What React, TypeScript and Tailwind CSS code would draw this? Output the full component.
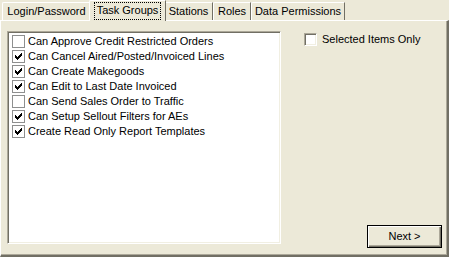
import React from "react";

const items = [
  { label: "Can Approve Credit Restricted Orders", checked: false },
  { label: "Can Cancel Aired/Posted/Invoiced Lines", checked: true },
  { label: "Can Create Makegoods", checked: true },
  { label: "Can Edit to Last Date Invoiced", checked: true },
  { label: "Can Send Sales Order to Traffic", checked: false },
  { label: "Can Setup Sellout Filters for AEs", checked: true },
  { label: "Create Read Only Report Templates", checked: true },
];

const tabs = [
  { label: "Login/Password", width: "w-[89px]" },
  { label: "Task Groups", width: "w-[77px]", selected: true },
  { label: "Stations", width: "w-[49px]" },
  { label: "Roles", width: "w-[38px]" },
  { label: "Data Permissions", width: "w-[94px]" },
];

function Check() {
  return (
    <svg width="7" height="7" viewBox="0 0 7 7" className="block">
      <path d="M0 2h1v1h1v1h1V3h1V2h1V1h1V0h1v3H6v1H5v1H4v1H3v1H2V6H1V5H0z" fill="#000" />
    </svg>
  );
}

function ListCheckbox({ checked }: { checked: boolean }) {
  return (
    <div className="flex h-[13px] w-[13px] items-center justify-center border border-[#8e8f8f] bg-white">
      {checked && <Check />}
    </div>
  );
}

export default function App() {
  return (
    <div
      className="relative h-[257px] w-[449px] overflow-hidden bg-[#ece9d8] text-[11px] leading-none text-black"
      style={{ fontFamily: '"Liberation Sans", Arial, sans-serif' }}
    >
      <div className="flex h-[20px] items-end pl-[2px]">
        {tabs.map((tab) =>
          tab.selected ? (
            <div
              key={tab.label}
              className={`${tab.width} relative z-10 -mx-[2px] -mb-[1px] flex h-[21px] items-center justify-center rounded-tl-[2px] border-l border-t border-r border-l-white border-t-white border-r-[#716f64] bg-[#ece9d8] pb-[1px]`}
            >
              <span className="border border-dotted border-black px-[2px] pb-[3px] pt-[2px]">{tab.label}</span>
            </div>
          ) : (
            <div
              key={tab.label}
              className={`${tab.width} flex h-[18px] items-center justify-center rounded-tl-[2px] border-l border-t border-r border-l-white border-t-white border-r-[#716f64] pb-[1px]`}
            >
              {tab.label}
            </div>
          )
        )}
      </div>

      <div className="flex h-[237px] border-b-2 border-l border-r-2 border-t border-b-[#716f64] border-l-white border-r-[#716f64] border-t-white pl-[6px] pt-[10px] shadow-[inset_-1px_-1px_0_#aca899]">
        <div className="h-[213px] w-[274px] border border-b-white border-l-[#aca899] border-r-white border-t-[#aca899] bg-white shadow-[inset_1px_1px_0_#716f64,inset_-1px_-1px_0_#f1efe2]">
          <div className="pl-[4px] pt-[2px]">
            {items.map((item) => (
              <div key={item.label} className="flex h-[15px] items-center gap-[3px]">
                <ListCheckbox checked={item.checked} />
                <span className="whitespace-nowrap">{item.label}</span>
              </div>
            ))}
          </div>
        </div>

        <div className="flex flex-1 flex-col justify-between pb-[7px] pr-[5px]">
          <div className="ml-[23px] mt-[2px] flex items-center gap-[5px]">
            <div className="h-[13px] w-[13px] border border-b-white border-l-[#aca899] border-r-white border-t-[#aca899] bg-white shadow-[inset_1px_1px_0_#716f64,inset_-1px_-1px_0_#f1efe2]" />
            <span className="whitespace-nowrap">Selected Items Only</span>
          </div>
          <div className="flex justify-end">
            <button className="flex h-[23px] w-[75px] items-center justify-center border border-black bg-[#ece9d8] shadow-[inset_1px_1px_0_#fff,inset_-1px_-1px_0_#716f64,inset_-2px_-2px_0_#aca899]">
              Next &gt;
            </button>
          </div>
        </div>
      </div>
    </div>
  );
}
